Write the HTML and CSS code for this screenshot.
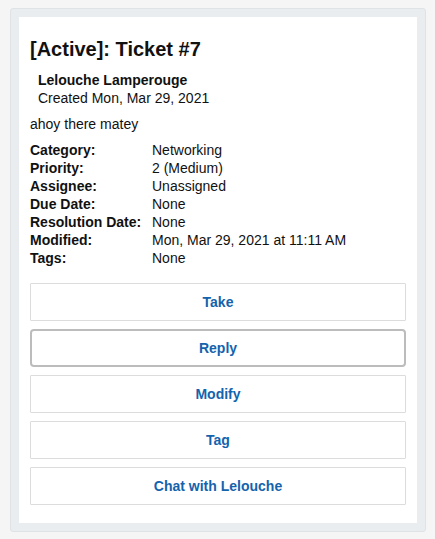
FILE: index.html
```html
<!DOCTYPE html>
<html>
<head>
<meta charset="utf-8">
<link rel="stylesheet" href="styles.css">
</head>
<body>
<div class="frame">
  <div class="card">
    <h1 class="title">[Active]: Ticket #7</h1>
    <div class="author">
      <div class="author-name">Lelouche Lamperouge</div>
      <div class="created">Created Mon, Mar 29, 2021</div>
    </div>
    <p class="body-text">ahoy there matey</p>
    <dl class="details">
      <dt>Category:</dt><dd>Networking</dd>
      <dt>Priority:</dt><dd>2 (Medium)</dd>
      <dt>Assignee:</dt><dd>Unassigned</dd>
      <dt>Due Date:</dt><dd>None</dd>
      <dt>Resolution Date:</dt><dd>None</dd>
      <dt>Modified:</dt><dd>Mon, Mar 29, 2021 at 11:11 AM</dd>
      <dt>Tags:</dt><dd>None</dd>
    </dl>
    <div class="actions">
      <button class="action">Take</button>
      <button class="action action-focused">Reply</button>
      <button class="action">Modify</button>
      <button class="action">Tag</button>
      <button class="action">Chat with Lelouche</button>
    </div>
  </div>
</div>
</body>
</html>
```

FILE: styles.css
```css
html, body {
  margin: 0;
  padding: 0;
  background: #f5f5f5;
}

body {
  padding: 8px 9px 7px 10px;
  font-family: "Liberation Sans", Arial, Helvetica, sans-serif;
  color: #111;
  font-size: 14px;
  line-height: 18px;
}

.frame {
  background: #e9edf0;
  border: 1px solid #dfe3e6;
  border-radius: 3px;
  padding: 8px;
}

.card {
  background: #fff;
  padding: 20px 11px 18px 11px;
}

.title {
  margin: 0;
  font-size: 20px;
  line-height: 24px;
  font-weight: bold;
}

.author {
  margin-top: 10px;
  padding-left: 8px;
}

.author-name {
  font-weight: bold;
}

.body-text {
  margin: 8px 0 0 0;
}

.details {
  margin: 8px 0 0 0;
  display: grid;
  grid-template-columns: 122px 1fr;
}

.details dt {
  font-weight: bold;
}

.details dd {
  margin: 0;
}

.actions {
  margin-top: 16px;
  display: flex;
  flex-direction: column;
  gap: 8px;
}

.action {
  display: block;
  width: 100%;
  height: 38px;
  margin: 0;
  padding: 0;
  background: #fff;
  border: 1px solid #dcdcdc;
  border-radius: 1px;
  font-family: "Liberation Sans", Arial, Helvetica, sans-serif;
  font-size: 14px;
  font-weight: bold;
  color: #1463ad;
  text-align: center;
  cursor: pointer;
}

.action-focused {
  border: 2px solid #bcbcbc;
  border-radius: 4px;
}
```
